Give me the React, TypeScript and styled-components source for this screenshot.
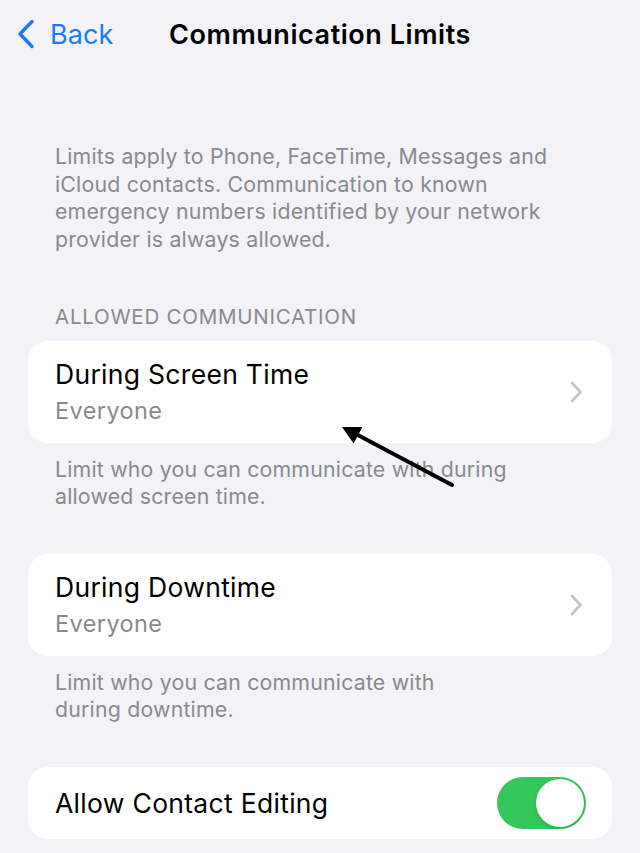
import React from "react";
import styled, { createGlobalStyle } from "styled-components";

const GlobalStyle = createGlobalStyle`
  html, body {
    margin: 0;
    padding: 0;
    background: #f2f2f7;
  }
  body {
    font-family: Inter, "Noto Sans", "Liberation Sans", sans-serif;
    -webkit-font-smoothing: antialiased;
  }
`;

interface RowItem {
  title: string;
  value: string;
  footer: string[];
}

const rows: RowItem[] = [
  {
    title: "During Screen Time",
    value: "Everyone",
    footer: ["Limit who you can communicate with during", "allowed screen time."],
  },
  {
    title: "During Downtime",
    value: "Everyone",
    footer: ["Limit who you can communicate with", "during downtime."],
  },
];

const ChevronLeft = () => (
  <svg width="20" height="30" viewBox="0 0 20 30" fill="none">
    <path
      d="M16 2.5 L4 15 L16 27.5"
      stroke="#1a7cf4"
      strokeWidth="3.4"
      strokeLinecap="round"
      strokeLinejoin="round"
    />
  </svg>
);

const ChevronRight = () => (
  <svg width="13" height="22" viewBox="0 0 13 22" fill="none">
    <path
      d="M2 2 L10.5 11 L2 20"
      stroke="#c4c4c7"
      strokeWidth="2.6"
      strokeLinecap="round"
      strokeLinejoin="round"
    />
  </svg>
);

const App: React.FC = () => {
  return (
    <>
      <GlobalStyle />
      <Screen>
        <NavBar>
          <BackButton>
            <ChevronLeft />
            <BackLabel>Back</BackLabel>
          </BackButton>
          <NavTitle>Communication Limits</NavTitle>
          <span />
        </NavBar>

        <Content>
          <Intro>
            Limits apply to Phone, FaceTime, Messages and
            <br />
            iCloud contacts. Communication to known
            <br />
            emergency numbers identified by your network
            <br />
            provider is always allowed.
          </Intro>

          <SectionHeader>ALLOWED COMMUNICATION</SectionHeader>

          {rows.map((row, i) => (
            <Group key={row.title} $first={i === 0}>
              <Card>
                <NavRow>
                  <RowText>
                    <RowTitle>{row.title}</RowTitle>
                    <RowValue>{row.value}</RowValue>
                  </RowText>
                  <ChevronRight />
                </NavRow>
              </Card>
              <Footer>
                {row.footer[0]}
                <br />
                {row.footer[1]}
              </Footer>
            </Group>
          ))}

          <Group $first={false}>
            <Card>
              <SwitchRow>
                <RowTitle>Allow Contact Editing</RowTitle>
                <Toggle $on>
                  <Knob />
                </Toggle>
              </SwitchRow>
            </Card>
          </Group>
        </Content>

        {/* pointer drawn over the first row */}
        <Pointer width="640" height="853" viewBox="0 0 640 853">
          <line
            x1="452"
            y1="485"
            x2="354"
            y2="433"
            stroke="#000"
            strokeWidth="4"
            strokeLinecap="round"
          />
          <polygon points="342,427 353.6,443.5 362.4,427" fill="#000" />
        </Pointer>
      </Screen>
    </>
  );
};

const Screen = styled.div`
  position: relative;
  width: 640px;
  min-height: 853px;
  background: #f2f2f7;
  overflow: hidden;
`;

const NavBar = styled.div`
  display: grid;
  grid-template-columns: 1fr auto 1fr;
  align-items: center;
  height: 68px;
  padding: 0 16px;
`;

const BackButton = styled.div`
  display: flex;
  align-items: center;
  gap: 14px;
  color: #1a7cf4;
`;

const BackLabel = styled.span`
  font-size: 27px;
  font-weight: 400;
  letter-spacing: 0.1px;
`;

const NavTitle = styled.div`
  font-size: 27px;
  font-weight: 600;
  color: #000;
  letter-spacing: 0.55px;
`;

const Content = styled.div`
  padding: 75px 28px 0;
`;

const Intro = styled.p`
  margin: 0;
  padding: 0 27px;
  font-size: 21.3px;
  line-height: 27.5px;
  letter-spacing: 0.2px;
  color: #8a8a8e;
`;

const SectionHeader = styled.div`
  margin-top: 50px;
  padding: 0 27px;
  font-size: 20.5px;
  line-height: 27px;
  letter-spacing: 0.75px;
  color: #8a8a8e;
`;

const Group = styled.div<{ $first: boolean }>`
  margin-top: ${(p) => (p.$first ? "11px" : "44px")};
`;

const Card = styled.div`
  background: #fff;
  border-radius: 20px;
`;

const NavRow = styled.div`
  display: flex;
  align-items: center;
  justify-content: space-between;
  padding: 17px 29px 17px 27px;
`;

const RowText = styled.div`
  display: flex;
  flex-direction: column;
  gap: 6px;
`;

const RowTitle = styled.div`
  font-size: 26.5px;
  line-height: 32px;
  letter-spacing: 0.3px;
  color: #000;
`;

const RowValue = styled.div`
  font-size: 23.5px;
  line-height: 30px;
  letter-spacing: 0.4px;
  color: #8a8a8e;
`;

const Footer = styled.p`
  margin: 13px 0 0;
  padding: 0 27px;
  font-size: 21.3px;
  line-height: 27px;
  letter-spacing: 0.2px;
  color: #8a8a8e;
`;

const SwitchRow = styled.div`
  display: flex;
  align-items: center;
  justify-content: space-between;
  height: 72px;
  padding: 0 26px 0 27px;
`;

const Toggle = styled.div<{ $on: boolean }>`
  display: flex;
  align-items: center;
  justify-content: ${(p) => (p.$on ? "flex-end" : "flex-start")};
  width: 89px;
  height: 52px;
  padding: 2px;
  box-sizing: border-box;
  border-radius: 26px;
  background: ${(p) => (p.$on ? "#34c759" : "#e9e9ea")};
`;

const Knob = styled.div`
  width: 48px;
  height: 48px;
  border-radius: 50%;
  background: #fff;
  box-shadow: 0 2px 4px rgba(0, 0, 0, 0.12);
`;

const Pointer = styled.svg`
  position: absolute;
  top: 0;
  left: 0;
  pointer-events: none;
`;

export default App;
